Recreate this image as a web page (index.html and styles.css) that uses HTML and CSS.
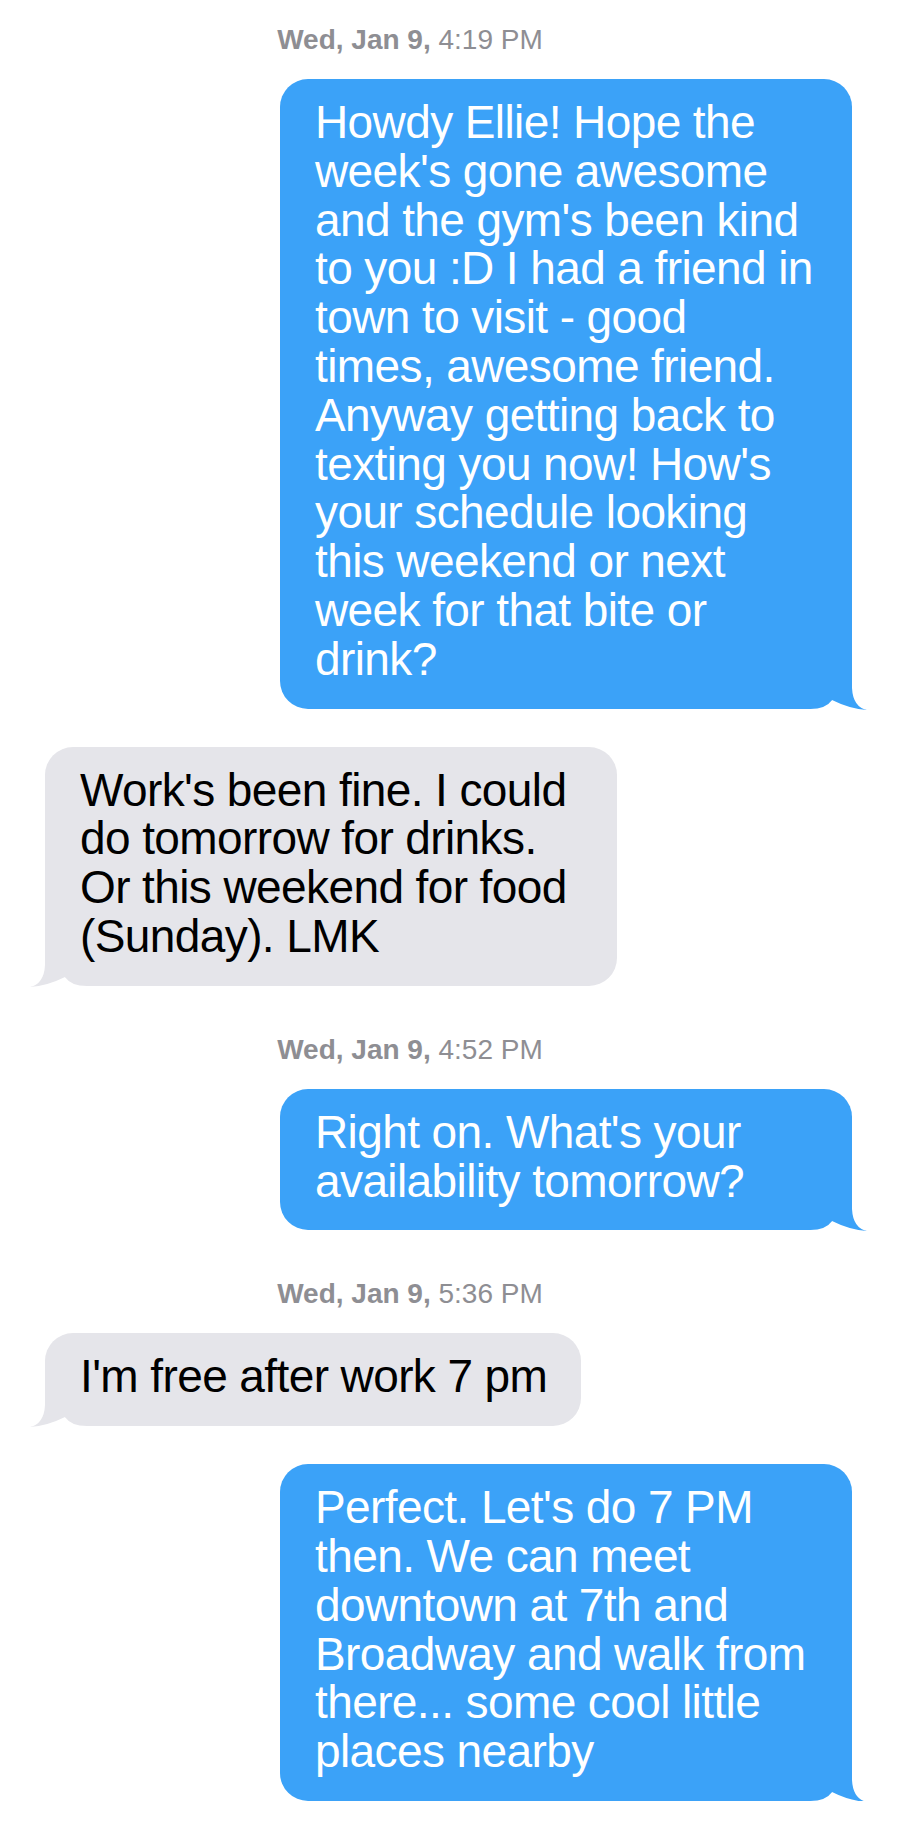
FILE: index.html
```html
<!DOCTYPE html>
<html lang="en">
<head>
    <meta charset="UTF-8">
    <meta name="viewport" content="width=device-width, initial-scale=1.0">
    <title>Messages</title>
    <link rel="stylesheet" href="styles.css">
</head>
<body>
    <div class="thread">
        <p class="stamp"><b>Wed, Jan 9,</b> 4:19 PM</p>
        <div class="bubble sent">
            Howdy Ellie! Hope the week's gone awesome and the gym's been kind to you :D I had a friend in town to visit - good times, awesome friend. Anyway getting back to texting you now! How's your schedule looking this weekend or next week for that bite or drink?
            <svg class="tail" viewBox="0 0 70 50"><path d="M0 0 L50 0 L50 27 Q51 46 65 49 Q48 48 30 39 Q24 48 8 48 L0 48 Z"/></svg>
        </div>

        <div class="bubble received">
            Work's been fine. I could do tomorrow for drinks. Or this weekend for food (Sunday). LMK
            <svg class="tail" viewBox="0 0 70 50"><path d="M0 0 L50 0 L50 27 Q51 46 65 49 Q48 48 30 39 Q24 48 8 48 L0 48 Z"/></svg>
        </div>

        <p class="stamp"><b>Wed, Jan 9,</b> 4:52 PM</p>
        <div class="bubble sent">
            Right on. What's your availability tomorrow?
            <svg class="tail" viewBox="0 0 70 50"><path d="M0 0 L50 0 L50 27 Q51 46 65 49 Q48 48 30 39 Q24 48 8 48 L0 48 Z"/></svg>
        </div>

        <p class="stamp"><b>Wed, Jan 9,</b> 5:36 PM</p>
        <div class="bubble received">
            I'm free after work 7 pm
            <svg class="tail" viewBox="0 0 70 50"><path d="M0 0 L50 0 L50 27 Q51 46 65 49 Q48 48 30 39 Q24 48 8 48 L0 48 Z"/></svg>
        </div>

        <div class="bubble sent">
            Perfect. Let's do 7 PM then. We can meet downtown at 7th and Broadway and walk from there... some cool little places nearby
            <svg class="tail" viewBox="0 0 70 50"><path d="M0 0 L50 0 L50 27 Q51 46 65 49 Q48 48 30 39 Q24 48 8 48 L0 48 Z"/></svg>
        </div>
    </div>
</body>
</html>
```

FILE: styles.css
```css
body {
    margin: 0;
    padding: 0;
    background: #fff;
    font-family: "Liberation Sans", Arial, sans-serif;
}

/* Conversation column */
.thread {
    display: flex;
    flex-direction: column;
    padding: 23px 48px 0 45px;
}

/* Date / time separators */
.stamp {
    margin: 47px 77px 22px 0;
    font-size: 28px;
    line-height: 34px;
    color: #8e8e93;
    text-align: center;
}

.stamp:first-child {
    margin-top: 0;
}

.stamp b {
    font-weight: bold;
}

/* Message bubbles */
.bubble {
    position: relative;
    isolation: isolate;
    box-sizing: border-box;
    max-width: 572px;
    padding: 19px 37px 25px 35px;
    border-radius: 28px;
    font-size: 46px;
    line-height: 48.8px;
    letter-spacing: -0.6px;
}

.bubble + .bubble {
    margin-top: 38px;
}

.sent {
    align-self: flex-end;
    background-color: #3ba2f8;
    color: #fff;
    border-bottom-right-radius: 48px;
}

.received {
    align-self: flex-start;
    padding-right: 34px;
    background-color: #e5e5ea;
    color: #000;
    border-bottom-left-radius: 48px;
}

/* Little tail at the bottom corner, kept behind the text */
.tail {
    position: absolute;
    z-index: -1;
    bottom: -2px;
    width: 70px;
    height: 50px;
}

.sent .tail {
    right: -20px;
    fill: #3ba2f8;
}

.received .tail {
    left: -20px;
    fill: #e5e5ea;
    transform: scaleX(-1);
}
```
